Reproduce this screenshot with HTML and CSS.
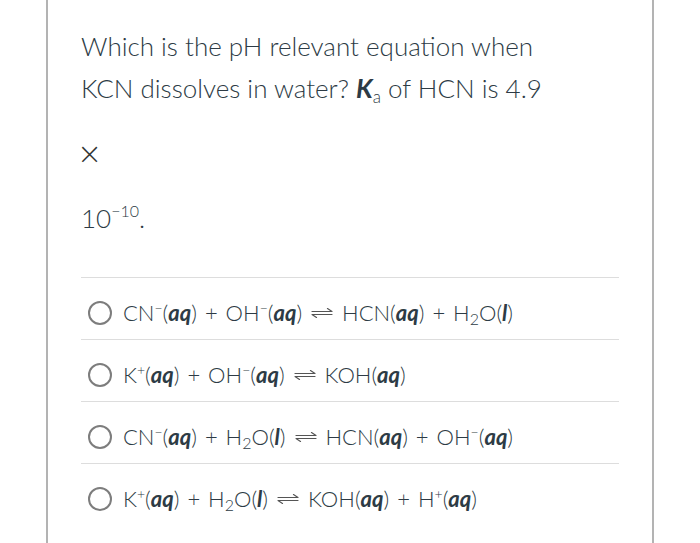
FILE: index.html
```html
<!DOCTYPE html>
<html lang="en">
<head>
<meta charset="utf-8">
<title>KCN question</title>
<link rel="stylesheet" href="styles.css">
</head>
<body>
<div class="card">
  <div class="question">
    <p class="q-text">Which is the pH relevant equation when<br>KCN dissolves in water? <b class="ka"><i>K</i></b><sub class="sub-a">a</sub> of HCN is 4.9</p>
    <p class="times">×</p>
    <p class="power">10<sup class="exp">−10</sup>.</p>
  </div>
  <ul class="options">
    <li class="option"><span class="radio"></span><span class="eq">CN<sup class="ion">−</sup>(<b class="ph">aq</b>) + OH<sup class="ion">−</sup>(<b class="ph">aq</b>) <svg class="eqarrow" viewBox="0 0 22 10" width="22" height="10"><path d="M1 3.5H21L16.5 0.6M21 6.5H1L5.5 9.4"/></svg> HCN(<b class="ph">aq</b>) + H<sub class="num">2</sub>O(<b class="ph">l</b>)</span></li>
    <li class="option"><span class="radio"></span><span class="eq">K<sup class="ion">+</sup>(<b class="ph">aq</b>) + OH<sup class="ion">−</sup>(<b class="ph">aq</b>) <svg class="eqarrow" viewBox="0 0 22 10" width="22" height="10"><path d="M1 3.5H21L16.5 0.6M21 6.5H1L5.5 9.4"/></svg> KOH(<b class="ph">aq</b>)</span></li>
    <li class="option"><span class="radio"></span><span class="eq">CN<sup class="ion">−</sup>(<b class="ph">aq</b>) + H<sub class="num">2</sub>O(<b class="ph">l</b>) <svg class="eqarrow" viewBox="0 0 22 10" width="22" height="10"><path d="M1 3.5H21L16.5 0.6M21 6.5H1L5.5 9.4"/></svg> HCN(<b class="ph">aq</b>) + OH<sup class="ion">−</sup>(<b class="ph">aq</b>)</span></li>
    <li class="option"><span class="radio"></span><span class="eq">K<sup class="ion">+</sup>(<b class="ph">aq</b>) + H<sub class="num">2</sub>O(<b class="ph">l</b>) <svg class="eqarrow" viewBox="0 0 22 10" width="22" height="10"><path d="M1 3.5H21L16.5 0.6M21 6.5H1L5.5 9.4"/></svg> KOH(<b class="ph">aq</b>) + H<sup class="ion">+</sup>(<b class="ph">aq</b>)</span></li>
  </ul>
</div>
</body>
</html>
```

FILE: styles.css
```css
html, body {
  margin: 0;
  padding: 0;
  background: #ffffff;
}

body {
  font-family: Lato, "Open Sans", "DejaVu Sans", sans-serif;
  font-weight: 300;
  color: #2d3b45;
}

.card {
  box-sizing: border-box;
  margin-left: 46px;
  width: 608px;
  height: 543px;
  border-left: 2px solid #b3b3b3;
  border-right: 2px solid #b3b3b3;
  padding: 26px 33px 0 33px;
}

.question p {
  margin: 0;
}

.q-text {
  font-size: 26px;
  line-height: 41.6px;
}

.ka {
  font-weight: 700;
}

.sub-a {
  font-size: 17px;
  line-height: 0;
  vertical-align: -5px;
}

.times {
  font-family: "DejaVu Sans", sans-serif;
  font-size: 30px;
  line-height: 40px;
  margin: 24.5px 0 0 -4px !important;
  color: #333;
}

.power {
  font-size: 26px;
  line-height: 40px;
  margin-top: 24px !important;
}

.exp {
  font-size: 16px;
  line-height: 0;
  vertical-align: 11px;
}

.options {
  list-style: none;
  margin: 39px 0 0 0;
  padding: 0;
}

.option {
  box-sizing: border-box;
  display: flex;
  align-items: center;
  height: 62px;
  border-top: 1px solid #dddddd;
  padding: 9px 0 0 7px;
}

.radio {
  flex: none;
  width: 20px;
  height: 20px;
  border: 2px solid #7d7d7d;
  border-radius: 50%;
  margin-right: 11px;
}

.eq {
  font-size: 22px;
  line-height: 30px;
  word-spacing: 2px;
  white-space: nowrap;
}

.ph {
  font-weight: 700;
  font-style: italic;
}

.ion {
  font-size: 14px;
  line-height: 0;
  vertical-align: 8px;
}

.num {
  font-size: 16px;
  line-height: 0;
  vertical-align: -4px;
}

.eqarrow {
  vertical-align: 3px;
  margin: 0 1px;
}

.eqarrow path {
  fill: none;
  stroke: #555;
  stroke-width: 1.2;
  stroke-linecap: round;
  stroke-linejoin: round;
}
```
